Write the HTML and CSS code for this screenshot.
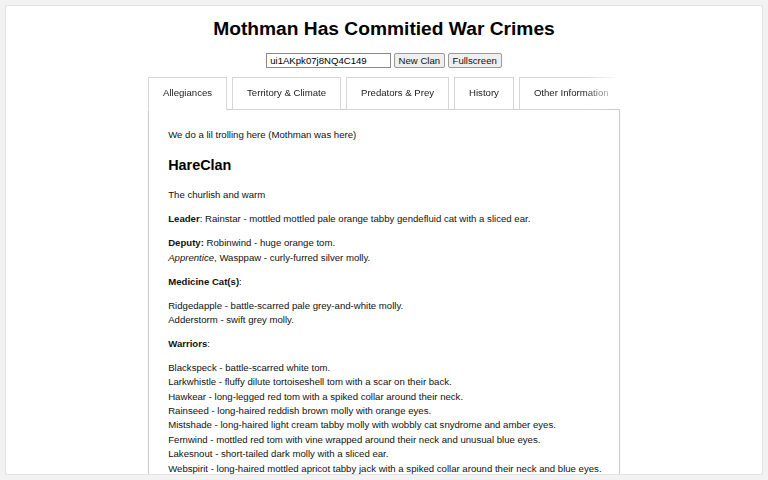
FILE: index.html
```html
<!doctype html>
<html lang="en">
<head>
    <meta charset="UTF-8">
    <title>Clan Generator</title>
    <link rel="stylesheet" href="styles.css">
</head>
<body>
<div class="card">
    <h1 class="title">Mothman Has Commitied War Crimes</h1>
    <div class="controls">
        <input class="seed" type="text" value="ui1AKpk07j8NQ4C149">
        <button class="btn">New Clan</button>
        <button class="btn">Fullscreen</button>
    </div>
    <div class="tabs">
        <div class="tab active">Allegiances</div>
        <div class="tab">Territory &amp; Climate</div>
        <div class="tab">Predators &amp; Prey</div>
        <div class="tab">History</div>
        <div class="tab">Other Information</div>
    </div>
    <div class="panel">
        <p>We do a lil trolling here (Mothman was here)</p>
        <h2>HareClan</h2>
        <p>The churlish and warm</p>
        <p><b>Leader</b>: Rainstar - mottled mottled pale orange tabby gendefluid cat with a sliced ear.</p>
        <p><b>Deputy:</b> Robinwind - huge orange tom.<br>
            <i>Apprentice</i>, Wasppaw - curly-furred silver molly.</p>
        <p><b>Medicine Cat(s)</b>:</p>
        <p>Ridgedapple - battle-scarred pale grey-and-white molly.<br>
            Adderstorm - swift grey molly.</p>
        <p><b>Warriors</b>:</p>
        <p>Blackspeck - battle-scarred white tom.<br>
            Larkwhistle - fluffy dilute tortoiseshell tom with a scar on their back.<br>
            Hawkear - long-legged red tom with a spiked collar around their neck.<br>
            Rainseed - long-haired reddish brown molly with orange eyes.<br>
            Mistshade - long-haired light cream tabby molly with wobbly cat snydrome and amber eyes.<br>
            Fernwind - mottled red tom with vine wrapped around their neck and unusual blue eyes.<br>
            Lakesnout - short-tailed dark molly with a sliced ear.<br>
            Webspirit - long-haired mottled apricot tabby jack with a spiked collar around their neck and blue eyes.</p>
    </div>
</div>
</body>
</html>
```

FILE: styles.css
```css
*{
    box-sizing: border-box;
}
body{
    margin: 4.8px;
    background-color: #f2f2f2;
    font-family: "Liberation Sans", Arial, sans-serif;
    color: #111;
}
.card{
    height: calc(100vh - 9.6px);
    overflow: hidden;
    background-color: #fff;
    border: 1px solid #e3e3e3;
    box-shadow: 0 0 3px rgba(0, 0, 0, 0.08);
    text-align: center;
}
.title{
    font-size: 19.2px;
    line-height: 1.5;
    margin: 9px 0 9.6px;
    color: #000;
}
.controls{
    display: flex;
    justify-content: center;
    gap: 2.4px;
    margin-bottom: 9.6px;
}
.seed{
    width: 125px;
    height: 14.4px;
    padding: 0 3px;
    border: 1px solid #8a8a8a;
    font: 9.6px "Liberation Sans", Arial, sans-serif;
    color: #000;
}
.btn{
    height: 14.4px;
    padding: 0 4px;
    border: 1px solid #9a9a9a;
    border-radius: 2px;
    background-color: #efefef;
    font: 9.6px "Liberation Sans", Arial, sans-serif;
    color: #111;
}
.tabs{
    display: flex;
    width: 472px;
    margin: 0 auto -1px;
    overflow: hidden;
    position: relative;
    z-index: 1;
    -webkit-mask-image: linear-gradient(to right, #000 calc(100% - 36px), transparent);
    mask-image: linear-gradient(to right, #000 calc(100% - 36px), transparent);
}
.tab{
    flex-shrink: 0;
    padding: 8px 14px;
    margin-right: 5px;
    border: 1px solid #d6d6d6;
    background-color: #fff;
    font-size: 9.6px;
    line-height: 14.4px;
    white-space: nowrap;
    color: #222;
}
.tab.active{
    border-bottom-color: #fff;
}
.panel{
    width: 472px;
    margin: 0 auto;
    padding: 9px 12px 8px 19.2px;
    border: 1px solid #cbcbcb;
    text-align: left;
    font-size: 9.6px;
    line-height: 1.5;
}
.panel p{
    margin: 9.6px 0;
}
.panel h2{
    font-size: 14.4px;
    line-height: 1.5;
    margin: 12px 0;
    color: #000;
}
```
